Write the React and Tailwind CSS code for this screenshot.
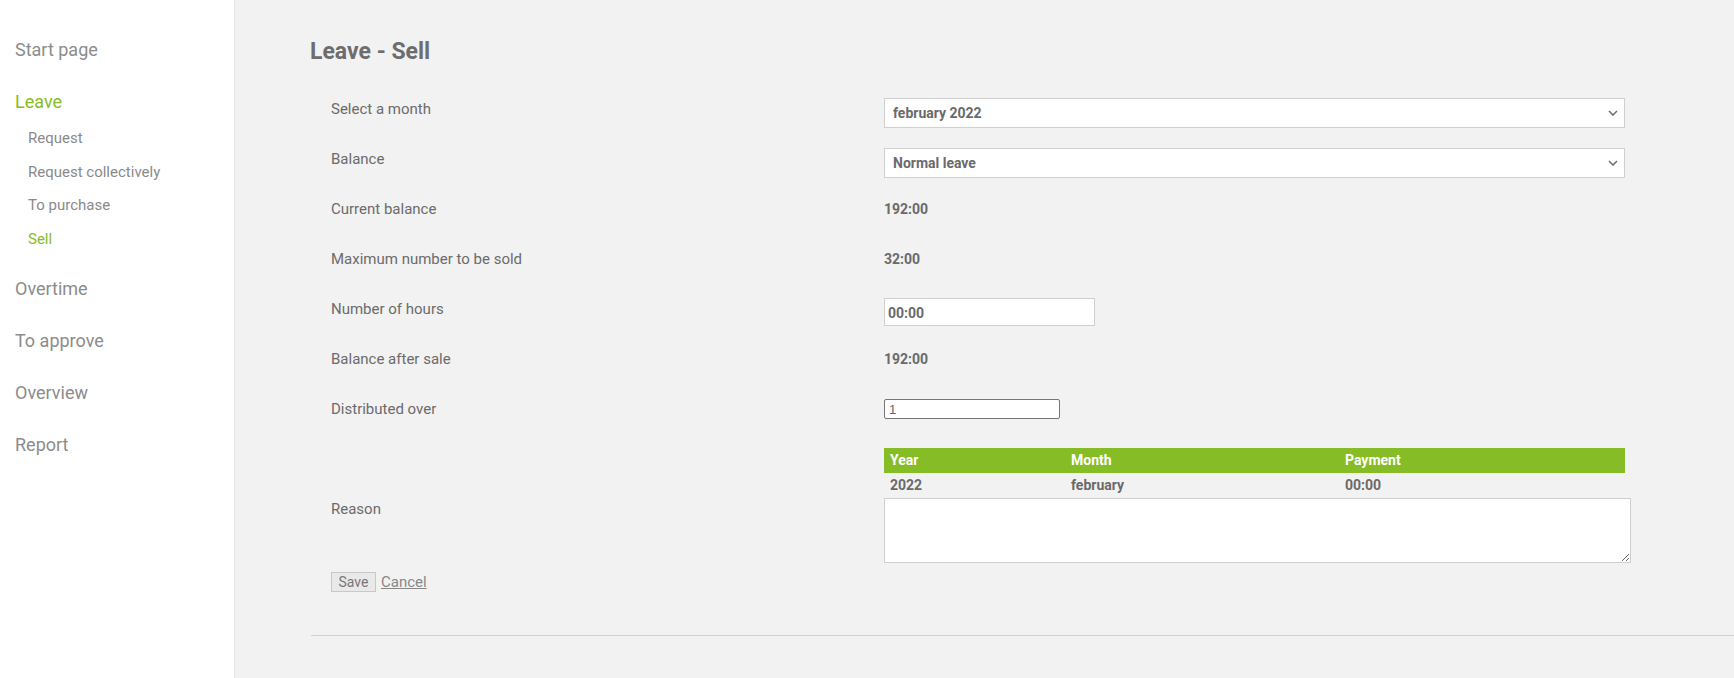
import React, { useState } from "react";

const navTop = ["Start page"];
const leaveSub = [
  { label: "Request" },
  { label: "Request collectively" },
  { label: "To purchase" },
  { label: "Sell", active: true },
];
const navBottom = ["Overtime", "To approve", "Overview", "Report"];

const Chevron = () => (
  <svg
    className="pointer-events-none absolute right-[7px] top-1/2 -translate-y-1/2"
    width="10"
    height="6"
    viewBox="0 0 10 6"
    fill="none"
  >
    <path d="M1 1l4 4 4-4" stroke="#6f6f6f" strokeWidth="1.6" />
  </svg>
);

const SelectBox = ({ value, options }) => (
  <div className="relative w-[741px]">
    <select
      defaultValue={value}
      className="block h-[30px] w-full appearance-none border border-[#cfcfcf] bg-white pl-[8px] pt-px text-[14px] font-bold text-[#6a6a6a] outline-none"
    >
      {options.map((o) => (
        <option key={o}>{o}</option>
      ))}
    </select>
    <Chevron />
  </div>
);

const Row = ({ label, children, className = "min-h-[50px]" }) => (
  <div className={`flex ${className}`}>
    <div className="w-[553px] shrink-0 pt-px text-[15px] leading-5 text-[#6b6b6b]">{label}</div>
    <div>{children}</div>
  </div>
);

const Value = ({ children }) => (
  <div className="pt-px text-[14px] font-bold leading-5 text-[#6a6a6a]">{children}</div>
);

const Sidebar = () => (
  <aside className="w-[235px] shrink-0 border-r border-[#e6e6e6] bg-white pt-[23.5px]">
    {navTop.map((n) => (
      <div key={n} className="flex h-[52px] items-center pl-[15px] text-[18px] leading-6 text-[#8c8c8c]">
        {n}
      </div>
    ))}
    <div className="pl-[15px] pt-[14px] pb-[8px] text-[18px] leading-6 text-[#86bc25]">Leave</div>
    <div className="pb-[7px]">
      {leaveSub.map((s) => (
        <div
          key={s.label}
          className={`flex h-[33.5px] items-center pl-[28px] text-[15px] ${
            s.active ? "text-[#86bc25]" : "text-[#8a8a8a]"
          }`}
        >
          {s.label}
        </div>
      ))}
    </div>
    {navBottom.map((n) => (
      <div key={n} className="flex h-[52px] items-center pl-[15px] text-[18px] leading-6 text-[#8c8c8c]">
        {n}
      </div>
    ))}
  </aside>
);

export default function App() {
  const [hours, setHours] = useState("00:00");
  const [spread, setSpread] = useState("1");

  return (
    <div className="flex min-h-[678px] bg-[#f2f2f2] font-['Roboto',sans-serif]">
      <Sidebar />
      <main className="flex-1 pl-[75px] pt-[38px]">
        <h1 className="text-[23px] font-bold leading-7 text-[#6d6d6d]">Leave - Sell</h1>

        <div className="ml-[21px] mt-[32px]">
          <Row label="Select a month">
            <SelectBox value="february 2022" options={["january 2022", "february 2022", "march 2022"]} />
          </Row>
          <Row label="Balance">
            <SelectBox value="Normal leave" options={["Normal leave", "Extra leave"]} />
          </Row>
          <Row label="Current balance">
            <Value>192:00</Value>
          </Row>
          <Row label="Maximum number to be sold">
            <Value>32:00</Value>
          </Row>
          <Row label="Number of hours">
            <input
              value={hours}
              onChange={(e) => setHours(e.target.value)}
              className="block h-[28px] w-[211px] border border-[#cfcfcf] bg-white pl-[3px] pt-px text-[14px] font-bold text-[#6a6a6a] outline-none"
            />
          </Row>
          <Row label="Balance after sale">
            <Value>192:00</Value>
          </Row>
          <Row label="Distributed over" className="">
            <div className="h-[50px] pt-px">
              <input
                value={spread}
                onChange={(e) => setSpread(e.target.value)}
                className="block h-[20px] w-[176px] rounded-[2px] border border-[#767676] bg-white px-[4px] font-['Liberation_Sans',sans-serif] text-[13px] text-[#666] outline-none"
              />
            </div>
            <table className="w-[741px] border-collapse text-left text-[14px] font-bold">
              <thead>
                <tr className="h-[25px] bg-[#86bc25] text-white">
                  <th className="w-[181px] px-[6px] font-bold">Year</th>
                  <th className="w-[274px] px-[6px] font-bold">Month</th>
                  <th className="px-[6px] font-bold">Payment</th>
                </tr>
              </thead>
              <tbody>
                <tr className="h-[25px] text-[#6a6a6a]">
                  <td className="px-[6px]">2022</td>
                  <td className="px-[6px]">february</td>
                  <td className="px-[6px]">00:00</td>
                </tr>
              </tbody>
            </table>
          </Row>
          <Row label="Reason" className="">
            <textarea className="block h-[65px] w-[747px] border border-[#cfcfcf] bg-white outline-none" />
          </Row>

          <div className="mt-[9px] flex items-center gap-[5px]">
            <button className="h-[20px] w-[45px] border border-[#c8c8c8] bg-[#e9e9e9] text-[14px] leading-none text-[#777]">
              Save
            </button>
            <a href="#" className="text-[15px] leading-5 text-[#888] underline">
              Cancel
            </a>
          </div>
        </div>

        <hr className="ml-px mt-[43px] border-0 border-t border-[#d0d0d0]" />
      </main>
    </div>
  );
}
